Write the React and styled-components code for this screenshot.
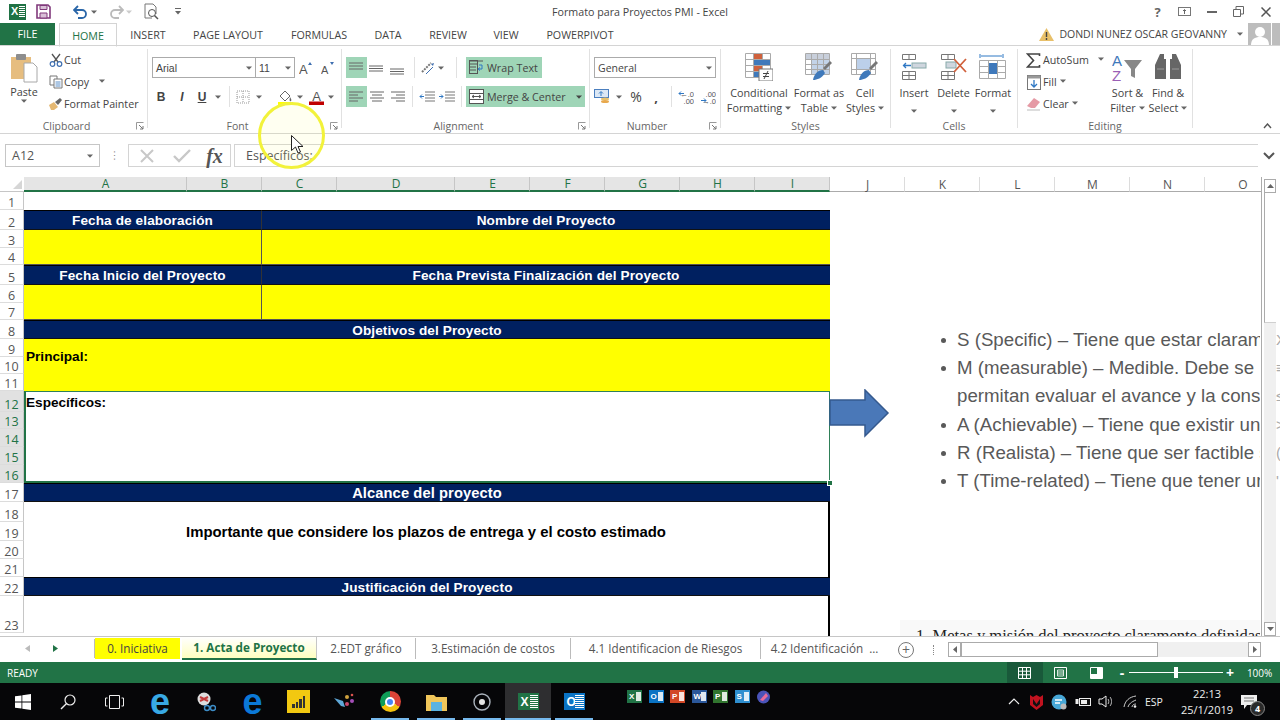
import React from 'react';
import styled, { createGlobalStyle } from 'styled-components';

const UI = `"Open Sans", "Noto Sans", sans-serif`;

const Global = createGlobalStyle`
  html, body { margin: 0; padding: 0; background: #fff; overflow: hidden; }
  * { box-sizing: border-box; }
`;

const Window = styled.div`
  position: relative; width: 1280px; height: 720px; overflow: hidden; display: flex; flex-direction: column;
  font-family: ${UI}; font-size: 11px; color: #444; background: #fff;
`;

/* ---------- title + tabs ---------- */
const TitleBar = styled.div`height: 23px; display: flex; align-items: center; padding-left: 8px; position: relative; flex: none;`;
const Title = styled.div`position: absolute; left: 0; right: 0; top: 5px; text-align: center; font-size: 10.7px; color: #444; pointer-events: none;`;
const QSlot = styled.div`width: ${p => p.$w}px; height: 20px; display: flex; align-items: center; justify-content: center; flex: none;`;
const WinControls = styled.div`margin-left: auto; display: flex; align-items: center; padding-right: 0;`;
const Help = styled.span`font-weight: 700; font-size: 13px; color: #666;`;

const TabRow = styled.div`height: 23px; display: flex; flex: none; align-items: stretch; border-bottom: 1px solid #d4d4d4; position: relative;`;
const FileTab = styled.div`width: 55px; background: #217346; color: #fff; display: flex; align-items: center; justify-content: center; font-size: 10.7px;`;
const RibTab = styled.div`
  width: ${p => p.$w}px; display: flex; align-items: center; justify-content: center; font-size: 10.7px; flex: none; padding-top: 1px;
  color: ${p => (p.$active ? '#217346' : '#444')}; margin-left: ${p => p.$ml || 0}px;
  ${p => p.$active && 'border: 1px solid #d4d4d4; border-bottom: 1px solid #fff; height: 24px;'}
`;
const UserBox = styled.div`margin-left: auto; display: flex; align-items: center; gap: 5px; font-size: 10.5px; color: #444;`;
const UserCaret = styled.span`display: inline-flex; margin-left: 5px;`;
const Avatar = styled.div`width: 23px; height: 22px; background: #bdbdbd; display: flex; align-items: flex-end; justify-content: center; overflow: hidden;`;
const AvatarStub = styled.div`width: 8px; height: 22px; background: #bdbdbd; margin-left: -4px;`;

/* ---------- ribbon ---------- */
const Ribbon = styled.div`height: 87px; flex: none; display: flex; padding: 3px 0 5px; border-bottom: 0; position: relative;`;
const Group = styled.div`
  width: ${p => p.$w}px; flex: none; display: flex; flex-direction: column; position: relative;
  border-right: 1px solid #e1e1e1;
`;
const GroupBody = styled.div`
  flex: 1; min-height: 0; display: flex; flex-direction: ${p => (p.$col ? 'column' : 'row')};
  padding-left: ${p => p.$pl || 0}px; padding-top: ${p => p.$pt || 0}px; gap: ${p => (p.$col ? '8px' : '0')};
`;
const GroupLabel = styled.div`height: 14px; line-height: 14px; margin-bottom: -5px; margin-top: -1px; text-align: center; font-size: 10.5px; color: #666; padding-right: ${p => p.$pr || 0}px;`;
const Launcher = styled.svg`position: absolute; right: 3px; bottom: -2px; width: 8px; height: 8px;`;
const PasteBtn = styled.div`width: 28px; display: flex; flex-direction: column; align-items: center; padding-top: 4px; flex: none; line-height: 15px; font-size: 10.8px;`;
const PasteText = styled.span`margin-top: 1px;`;
const SmallCol = styled.div`display: flex; flex-direction: column; margin-left: ${p => p.$ml || 0}px; width: ${p => p.$w ? p.$w + 'px' : 'auto'}; flex: none;`;
const SmallBtn = styled.div`height: 22px; display: flex; align-items: center; font-size: 10.7px; white-space: nowrap;`;
const SmallIcon = styled.span`width: ${p => p.$w || 17}px; display: flex; justify-content: center; flex: none;`;
const Row = styled.div`display: flex; height: 21px; align-items: center; padding-left: ${p => p.$pl || 0}px;`;
const Slot = styled.div`
  width: ${p => p.$w}px; height: 21px; flex: none; display: flex; align-items: center; justify-content: center;
  background: ${p => (p.$on ? '#9fd5b7' : 'transparent')};
  font-family: ${p => (p.$serif ? '"Liberation Sans", sans-serif' : 'inherit')};
  font-weight: ${p => (p.$b ? 700 : 400)}; font-style: ${p => (p.$i ? 'italic' : 'normal')};
  text-decoration: ${p => (p.$u ? 'underline' : 'none')}; font-size: ${p => p.$fs || 11}px; color: #444;
`;
const Sep = styled.div`
  width: ${p => p.$w}px; height: 21px; flex: none; display: flex; justify-content: center;
  &::before { content: ''; width: 1px; height: 100%; background: #e1e1e1; }
`;
const Combo = styled.div`
  width: ${p => p.$w}px; height: 21px; flex: none; border: 1px solid #ababab; background: #fff; display: flex; align-items: center;
  justify-content: space-between; padding: 0 3px 0 3px; font-size: ${p => p.$fs || 10.5}px; color: #444;
  font-family: ${p => (p.$arial ? '"Liberation Sans", sans-serif' : 'inherit')}; margin-left: ${p => p.$ml || 0}px;
`;
const TextBtn = styled.div`
  width: ${p => p.$w}px; height: 21px; flex: none; background: #9fd5b7; display: flex; align-items: center; padding-left: 3px; gap: 3px;
  font-size: 10.7px; white-space: nowrap; color: #444;
`;
const MergeCaret = styled.span`margin-left: 7px; display: inline-flex;`;
const Big = styled.div`width: ${p => p.$w}px; flex: none; display: flex; flex-direction: column; align-items: center; padding-top: 4px; text-align: center; line-height: 15px; font-size: 10.8px; white-space: nowrap;`;
const BigIcon = styled.div`height: 32px; display: flex; align-items: flex-start; justify-content: center;`;
const BigCaret = styled.span`padding-top: 1px;`;
const Collapse = styled.div`position: absolute; right: 8px; bottom: 1px;`;

const Caret = ({ c = '#666' }) => (<svg width="6" height="4" viewBox="0 0 6 4" style={{ flex: 'none' }}><path d="M0 .5h6L3 3.8z" fill={c} /></svg>);
const CaretText = styled.span`display: inline-flex; vertical-align: middle; margin-left: ${p => p.$ml || 3}px; margin-top: -2px;`;
const LauncherIcon = () => (<Launcher viewBox="0 0 8 8"><path d="M.5 7.5V.5h7" fill="none" stroke="#999" /><path d="M3 3l4 4M7 4v3H4" fill="none" stroke="#777" /></Launcher>);

const Lines = ({ y, w = 16, o = [[0, 14], [0, 14], [0, 14]] }) => (
  <svg width={w} height="14" viewBox="0 0 16 14">{o.map((l, i) => <path key={i} d={`M${l[0]} ${y[i]}h${l[1]}`} stroke="#666" strokeWidth="1" />)}</svg>
);
const Paste = () => (
  <svg width="28" height="30" viewBox="0 0 28 30"><rect x="1" y="4" width="20" height="22" fill="#e6bd7f" /><rect x="6" y="1" width="10" height="6" rx="1" fill="#8d8d8d" /><path d="M14 10h9l4 4v15H14z" fill="#fff" stroke="#a8a8a8" /></svg>
);
const Cut = () => (<svg width="14" height="14" viewBox="0 0 14 14"><path d="M3 1l6 8M11 1L5 9" stroke="#555" strokeWidth="1.3" fill="none" /><circle cx="3.5" cy="11" r="2.3" fill="none" stroke="#3f6fb0" strokeWidth="1.2" /><circle cx="10.5" cy="11" r="2.3" fill="none" stroke="#3f6fb0" strokeWidth="1.2" /></svg>);
const Copy = () => (<svg width="14" height="14" viewBox="0 0 14 14"><path d="M1 1h7v9H1z" fill="#fff" stroke="#777" /><path d="M5 4h8v9H5z" fill="#fff" stroke="#777" /><path d="M6.5 7h5M6.5 9h5M6.5 11h5" stroke="#5a8fc9" /></svg>);
const Painter = () => (<svg width="15" height="14" viewBox="0 0 15 14"><path d="M1 8l5-3 4 5-4 3H3z" fill="#e4b873" /><path d="M7 5l5-4 2 2-4 5z" fill="#666" /></svg>);
const GrowA = ({ up }) => (<svg width="14" height="14" viewBox="0 0 14 14"><text x="0" y="13" fontFamily="Liberation Sans" fontSize={up ? 13 : 11} fill="#555">A</text><path d={up ? 'M9 4l2-3 2 3z' : 'M9 1l2 3 2-3z'} fill="#3f6fb0" /></svg>);
const Borders = () => (<svg width="14" height="14" viewBox="0 0 14 14"><path d="M1 1h12v12H1zM7 1v12M1 7h12" fill="none" stroke="#999" strokeDasharray="1 1" /></svg>);
const Fill = () => (<svg width="15" height="16" viewBox="0 0 15 16"><path d="M2 7l5-5 5 5-5 5z" fill="#fff" stroke="#666" /><path d="M12 8c1 2 2 3 1 4s-2 0-1-4z" fill="#666" /><rect x="0" y="13" width="15" height="3" fill="#ffff00" /></svg>);
const FontColor = () => (<svg width="15" height="16" viewBox="0 0 15 16"><text x="7.5" y="12" textAnchor="middle" fontFamily="Liberation Sans" fontSize="13" fill="#555">A</text><rect x="0" y="12.5" width="15" height="3.5" fill="#c00000" /></svg>);
const Orient = () => (<svg width="16" height="14" viewBox="0 0 16 14"><path d="M2 11L11 2" stroke="#777" strokeWidth="2" strokeDasharray="2 1" /><path d="M6 13l7-7" stroke="#3f6fb0" /><path d="M11 3l3-1-1 3z" fill="#3f6fb0" /></svg>);
const Indent = ({ rev }) => (<svg width="16" height="12" viewBox="0 0 16 12"><path d="M6 1h10M6 4h10M6 7h10M6 10h10" stroke="#777" /><path d={rev ? 'M0 5.5h4M2 3.5l2 2-2 2' : 'M5 5.5H1M3 3.5l-2 2 2 2'} stroke="#2f78c4" fill="none" /></svg>);
const Wrap = () => (<svg width="15" height="15" viewBox="0 0 15 15"><path d="M1 1h13M1 4h8M1 7h6M1 10h6" stroke="#555" /><rect x="0.5" y="0.5" width="8" height="13" fill="none" stroke="#555" /><path d="M10 5h3v4h-3M11 7.5l-2 1.5 2 1.5" stroke="#2f78c4" fill="none" /></svg>);
const Merge = () => (<svg width="15" height="15" viewBox="0 0 15 15"><rect x=".5" y=".5" width="14" height="14" fill="#fff" stroke="#555" /><path d="M.5 4.5h14M.5 10.5h14" stroke="#555" /><path d="M3 7.5h9M3 7.5l2-1.5M3 7.5L5 9M12 7.5L10 6M12 7.5L10 9" stroke="#555" fill="none" /></svg>);
const Account = () => (<svg width="17" height="15" viewBox="0 0 17 15"><rect x=".5" y=".5" width="14" height="8" fill="#dce8f5" stroke="#4b7fbf" /><path d="M7 7V3M5 4.5l2-2 2 2" stroke="#2f78c4" fill="none" /><ellipse cx="11" cy="10" rx="4" ry="1.5" fill="#e8c26e" /><ellipse cx="11" cy="12.5" rx="4" ry="1.5" fill="#e8a94e" /></svg>);
const Dec = ({ t, b, up }) => (<svg width="16" height="14" viewBox="0 0 16 14"><text x="16" y="6.5" textAnchor="end" fontFamily="Liberation Sans" fontSize="7.5" fill="#555">{t}</text><text x="16" y="13.5" textAnchor="end" fontFamily="Liberation Sans" fontSize="7.5" fill="#555">{b}</text><path d={up ? 'M6 3.5H1M3 1.5l-2 2 2 2' : 'M1 10.5h5M4 8.5l2 2-2 2'} stroke="#2f78c4" fill="none" /></svg>);
const CondFmt = () => (<svg width="28" height="28" viewBox="0 0 28 28"><path d="M.5.5h25v24H.5zM.5 6.5h25M.5 12.5h25M.5 18.5h25M8.5.5v24M17.5.5v24" fill="#fff" stroke="#aaa" /><rect x="9" y="1" width="8" height="5" fill="#d0613c" /><rect x="9" y="7" width="16" height="5" fill="#3f79bb" /><rect x="9" y="13" width="8" height="5" fill="#d0613c" /><rect x="9" y="19" width="6" height="5" fill="#3f79bb" /><rect x="14" y="16" width="14" height="12" fill="#fff" stroke="#777" /><path d="M18 20.5h6M18 23.5h6M23 18l-4 8" stroke="#444" /></svg>);
const FmtTable = () => (<svg width="28" height="28" viewBox="0 0 28 28"><path d="M.5.5h24v21H.5z" fill="#fff" stroke="#aaa" /><rect x="1" y="1" width="23" height="5" fill="#c8cfdb" /><rect x="6" y="6" width="18" height="15" fill="#c3d3e8" /><path d="M.5 6.5h24M.5 11.5h24M.5 16.5h24M6.5.5v21M12.5.5v21M18.5.5v21" stroke="#aaa" fill="none" /><path d="M18 15l7-7 2 2-7 7z" fill="#777" /><path d="M8 27c1-6 5-10 10-10l2 3c-3 5-8 7-12 7z" fill="#3f79bb" /></svg>);
const CellStyle = () => (<svg width="28" height="28" viewBox="0 0 28 28"><path d="M.5.5h24v21H.5z" fill="#fff" stroke="#aaa" /><rect x="5" y="6" width="14" height="10" fill="#bcd0ea" /><path d="M.5 5.5h24M.5 16.5h24M5.5.5v21M19.5.5v21" stroke="#aaa" fill="none" /><path d="M18 15l7-7 2 2-7 7z" fill="#777" /><path d="M8 27c1-6 5-10 10-10l2 3c-3 5-8 7-12 7z" fill="#3f79bb" /></svg>);
const Insert = () => (<svg width="26" height="28" viewBox="0 0 26 28"><path d="M1.5 1.5h13v5h-13zM8 1.5v5M1.5 18.5h13v8h-13zM1.5 22.5h13M8 18.5v8" fill="#fff" stroke="#777" /><rect x="11" y="10" width="14" height="5" fill="#cfd6de" stroke="#8aa" /><path d="M10 12.5H3M5 10l-2.5 2.5L5 15" stroke="#2f78c4" strokeWidth="1.3" fill="none" /></svg>);
const Delete = () => (<svg width="28" height="28" viewBox="0 0 28 28"><path d="M1.5 1.5h13v5h-13zM8 1.5v5M1.5 18.5h13v8h-13zM1.5 22.5h13M8 18.5v8" fill="#fff" stroke="#777" /><rect x="6" y="9" width="10" height="6" fill="#cfd6de" stroke="#8aa" /><path d="M14 6l12 13M26 6L14 19" stroke="#d0613c" strokeWidth="1.8" /></svg>);
const Format = () => (<svg width="28" height="30" viewBox="0 0 28 30"><path d="M1 1v4M24 1v4M2 3h21" stroke="#2f78c4" /><path d="M.5 7.5h26v18H.5zM9.5 7.5v18M18.5 7.5v18M.5 13.5h26M.5 19.5h26" fill="#fff" stroke="#aaa" /><rect x="10" y="10" width="8" height="11" fill="#3f79bb" /></svg>);
const Sigma = () => (<svg width="15" height="15" viewBox="0 0 15 15"><path d="M13.5 3V1H1.5l6 6.5-6 6.5h12v-2" fill="none" stroke="#444" strokeWidth="1.6" /></svg>);
const FillD = () => (<svg width="14" height="15" viewBox="0 0 14 15"><rect x=".5" y=".5" width="13" height="14" fill="#fff" stroke="#777" /><rect x=".5" y=".5" width="13" height="3" fill="#999" /><path d="M7 5v7M4 9l3 3 3-3" stroke="#2f78c4" strokeWidth="1.3" fill="none" /></svg>);
const Eraser = () => (<svg width="15" height="14" viewBox="0 0 15 14"><path d="M8 1l6 4-5 6H5L1 9z" fill="#e59aa5" /><path d="M1 13h13" stroke="#bbb" /></svg>);
const SortF = () => (<svg width="32" height="30" viewBox="0 0 32 30"><text x="0" y="13" fontFamily="Liberation Sans" fontSize="15" fill="#3f79bb">A</text><text x="0" y="28" fontFamily="Liberation Sans" fontSize="15" fill="#9a5fb5">Z</text><path d="M12 7h18l-7 9v9l-4-2v-7z" fill="#888" /></svg>);
const Binoc = () => (<svg width="26" height="28" viewBox="0 0 26 28"><path d="M5 1h4v5h2v20H0V12zM21 1h-4v5h-2v20h11V12z" fill="#666" /><path d="M2 16h7M17 16h7" stroke="#999" /></svg>);
const Up = () => (<svg width="9" height="6" viewBox="0 0 9 6"><path d="M1 5l3.5-4L8 5" fill="none" stroke="#555" strokeWidth="1.4" /></svg>);

/* ---------- formula bar ---------- */
const FormulaArea = styled.div`height: 44px; flex: none; border-top: 1px solid #d4d4d4; padding: 10px 0 10px 5px; display: flex; align-items: stretch;`;
const NameBox = styled.div`width: 95px; border: 1px solid #c6c6c6; display: flex; align-items: center; justify-content: space-between; padding: 0 6px; font-size: 12.5px; color: #555;`;
const Dots = styled.div`width: 28px; display: flex; align-items: center; justify-content: center; color: #888; font-size: 11px; letter-spacing: 0; writing-mode: vertical-rl;`;
const FxBox = styled.div`width: 103px; border: 1px solid #d4d4d4; display: flex; align-items: center; font-size: 11px;`;
const FxSlot = styled.div`width: ${p => p.$w}px; display: flex; justify-content: center; align-items: center; flex: none;`;
const Fx = styled.span`font-family: "Liberation Serif", serif; font-style: italic; font-weight: 700; font-size: 20px; color: #555; line-height: 20px;`;
const FormulaInput = styled.div`width: 1024px; margin-left: 3px; border: 1px solid #d4d4d4; border-right: 0; display: flex; align-items: center; padding-left: 11px; font-size: 12.5px; color: #555;`;
const FormulaEnd = styled.div`flex: 1; display: flex; align-items: center; justify-content: center; padding-right: 0;`;

/* ---------- sheet ---------- */
const SheetRow = styled.div`flex: 1; min-height: 0; display: flex;`;
const Main = styled.div`width: 1262px; flex: none; display: flex; flex-direction: column; border-right: 1px solid #ababab;`;
const ColBar = styled.div`height: 15px; flex: none; display: flex; overflow: visible;`;
const Corner = styled.div`width: 24px; flex: none; display: flex; align-items: flex-end; justify-content: flex-end; padding: 0 2px 2px 0; border-bottom: 1px solid #c6c6c6;`;
const ColHead = styled.div`
  width: ${p => p.$w}px; flex: none; display: flex; align-items: center; justify-content: center; font-size: 12px; line-height: 13px; padding-left: 1px;
  background: ${p => (p.$sel ? '#e5e5e5' : 'transparent')}; color: ${p => (p.$sel ? '#217346' : '#555')};
  border-right: 1px solid ${p => (p.$sel ? '#c6c6c6' : '#dcdcdc')};
  border-bottom: ${p => (p.$sel ? '2px solid #217346' : '1px solid #ababab')};
`;
const ColEnd = styled.div`width: 57px; height: 15px; flex: none; border-bottom: 1px solid #ababab;`;
const ColEndLabel = styled.div`width: 75px; display: flex; justify-content: center; line-height: 13px; font-size: 12px; color: #555; padding-left: 1px; height: 14px; align-items: center;`;
const Grid = styled.div`
  flex: 1; min-height: 0; position: relative; overflow: hidden; display: grid;
  grid-template-columns: 24px 163px 75px 75px 118px 75px 75px 75px 75px 75px 431px;
  grid-template-rows: ${p => p.$rows};
`;
const RowHead = styled.div`
  grid-column: 1; grid-row: ${p => p.$r}; display: flex; align-items: flex-end; justify-content: center; padding-bottom: 0;
  font-size: 12.5px; line-height: 13px; border-right: 1px solid #c6c6c6; border-bottom: 1px solid #dcdcdc;
  background: ${p => (p.$sel ? '#e1e1e1' : '#fff')}; color: ${p => (p.$sel ? '#217346' : '#555')};
`;
const Band = styled.div`
  grid-column: ${p => p.$c}; grid-row: ${p => p.$r}; background: #002060; color: #fff; display: flex; align-items: center; justify-content: center;
  font: 700 ${p => p.$fs || 13.6}px/15px "Liberation Sans", Arial, sans-serif; letter-spacing: .1px; white-space: nowrap; padding-top: 1px;
  border-top: 1px solid #000; border-bottom: 1px solid #111;
  border-right: ${p => (p.$div ? '1px solid #333' : '0')};
`;
const Yellow = styled.div`
  grid-column: ${p => p.$c}; grid-row: ${p => p.$r}; background: #ffff00; color: #000; padding: ${p => p.$pt || 0}px 2px 0;
  font: 700 13.6px/15px "Liberation Sans", Arial, sans-serif;
  border-bottom: ${p => (p.$nb ? '0' : '1px solid #555')}; border-right: ${p => (p.$div ? '1px solid #555' : '0')};
`;
const Selected = styled.div`
  grid-column: 2 / 11; grid-row: 12 / 17; border: 1px solid #2f8058; border-bottom: 2px solid #217346; border-left: 2px solid #217346; padding: 3px 0 0;
  font: 700 13.6px/15px "Liberation Sans", Arial, sans-serif; color: #000;
`;
const Blank = styled.div`
  grid-column: 2 / 11; grid-row: ${p => p.$r}; border-right: 2px solid #000; color: #000; text-align: center; padding-top: ${p => p.$pt || 0}px;
  font: 700 14.9px/17px "Liberation Sans", Arial, sans-serif; white-space: nowrap;
`;
const Handle = styled.div`position: absolute; left: 827px; top: 288px; width: 6px; height: 6px; background: #217346; border: 1px solid #fff;`;
const Arrow = styled.svg`position: absolute; left: 829px; top: 197px; width: 61px; height: 49px;`;
const Picture = styled.ul`
  position: absolute; left: 905px; top: 134px; width: 355px; margin: 0; padding: 0; list-style: none; overflow: hidden; background: #fff;
  font: 18.7px/28.2px "Liberation Sans", Arial, sans-serif; color: #595959; white-space: nowrap;
`;
const Bullet = styled.li`
  padding-left: 52px; position: relative; word-spacing: ${p => p.$ws || 0}px;
  ${p => !p.$cont && `&::before { content: ''; position: absolute; left: 36px; top: 12px; width: 5px; height: 5px; border-radius: 50%; background: #595959; }`}
`;
const Picture2 = styled.div`
  position: absolute; left: 900px; top: 428px; width: 360px; height: 16px; background: #f9f9f9; overflow: hidden; padding: 8px 0 0 16px;
  font: 16.5px/16px "Liberation Serif", serif; color: #222; white-space: nowrap;
`;
const VScroll = styled.div`flex: 1; position: relative; overflow: hidden;`;
const ScrollBtn = styled.div`
  position: absolute; left: 2px; width: 12px; height: 14px; ${p => (p.$top ? 'top: 2px;' : 'bottom: 0;')} display: flex; align-items: center; justify-content: center;
  background: #fff; border: 1px solid #ababab;
`;
const ScrollThumb = styled.div`position: absolute; left: 2px; top: 16px; width: 12px; height: 130px; background: #fff; border-left: 1px solid #ababab; border-bottom: 1px solid #d0d0d0;`;
const ScrollTrack = styled.div`position: absolute; left: 2px; top: 146px; bottom: 14px; width: 12px; background: #f0f0f0;`;
const Fragments = styled.div`position: absolute; left: 14px; top: 149px; font: 15px/28.2px "Liberation Sans", sans-serif; color: #aaa; width: 6px; overflow: hidden; white-space: pre;`;

/* ---------- sheet tabs ---------- */
const TabsBar = styled.div`height: 26px; flex: none; border-top: 1px solid #c6c6c6; display: flex; align-items: stretch; background: #fff;`;
const TabNav = styled.div`width: 95px; flex: none; display: flex; align-items: center; padding-left: 25px; gap: 23px; border-right: 1px solid #bbb; margin: 2px 0 4px;`;
const Sheet = styled.div`
  width: ${p => p.$w}px; flex: none; display: flex; align-items: center; justify-content: center; font-size: 11.7px; white-space: nowrap; color: #555;
  margin: 1px 0 3px; border-right: 1px solid ${p => (p.$plain ? '#bbb' : 'transparent')}; height: 21px; padding-bottom: 1px;
  ${p => p.$yellow && 'background: #ffff00; color: #444; border-right: 2px solid #fff; height: 21px;'}
  ${p => p.$active && 'background: linear-gradient(#ffffff, #ffffc0); color: #217346; font-weight: 700; border-bottom: 2px solid #217346; margin-top: 0; height: 23px; margin-bottom: 2px; border-right: 1px solid #c6c6c6;'}
`;
const TabsEnd = styled.div`flex: 1; display: flex; align-items: center; min-width: 0;`;
const Plus = styled.div`width: 16px; height: 16px; border: 1px solid #777; border-radius: 50%; display: flex; align-items: center; justify-content: center; color: #666; font-size: 14px; line-height: 12px; margin-left: 9px; flex: none;`;
const VDots = styled.div`width: 1px; height: 10px; margin: 0 14px 0 19px; border-left: 1px dotted #888; flex: none;`;
const HScroll = styled.div`width: 313px; height: 15px; flex: none; display: flex; background: #f0f0f0;`;
const HBtn = styled.div`width: 13px; flex: none; border: 1px solid #ababab; background: #fff; display: flex; align-items: center; justify-content: center;`;
const HThumb = styled.div`width: ${p => p.$w}px; flex: none; background: #fff; border: 1px solid #ababab;`;
const HGap = styled.div`flex: 1;`;

/* ---------- status ---------- */
const Status = styled.div`height: 21px; flex: none; background: #217346; color: #fff; display: flex; align-items: center; font-size: 10px; padding-left: 7px;`;
const ViewBox = styled.div`width: 36px; height: 21px; flex: none; display: flex; align-items: center; justify-content: center; background: ${p => (p.$on ? '#19593a' : 'transparent')}; margin-left: ${p => p.$ml || 0}px;`;
const ZoomSign = styled.span`font-size: 14px; font-weight: 700; width: 14px; text-align: center; flex: none; line-height: 14px;`;
const ZoomSlider = styled.div`width: 94px; height: 1px; background: #fff; position: relative; flex: none; margin: 0 0;`;
const ZoomThumb = styled.div`position: absolute; left: 45px; top: -5px; width: 4px; height: 11px; background: #fff;`;
const Pct = styled.span`margin-left: 10px; font-size: 10px;`;

/* ---------- taskbar ---------- */
const Task = styled.div`height: 37px; flex: none; background: #060608; display: flex; align-items: center; position: relative; color: #eee;`;
const TaskBtn = styled.div`
  width: ${p => p.$w}px; height: 37px; flex: none; display: flex; align-items: center; justify-content: center; position: relative; margin-left: ${p => p.$ml || 0}px;
  background: ${p => (p.$on ? '#2e2e30' : 'transparent')};
  ${p => p.$run && `&::after { content: ''; position: absolute; left: 0; right: 0; bottom: 0; height: 2px; background: #76b9ed; }`}
`;
const E = styled.span`font: 700 ${p => p.$s || 28}px/30px "Liberation Sans", sans-serif; color: ${p => p.$c};`;
const PowerBi = styled.div`width: 23px; height: 23px; background: #f2c811; display: flex; align-items: flex-end; justify-content: center; gap: 1px; padding-bottom: 5px;`;
const PBar = styled.div`width: 2.5px; background: #333; height: ${p => p.$h}px;`;
const Chrome = styled.div`width: 21px; height: 21px; border-radius: 50%; background: conic-gradient(#db4437 0 120deg, #f4c20d 120deg 240deg, #0f9d58 240deg 360deg); display: flex; align-items: center; justify-content: center;`;
const ChromeCore = styled.div`width: 10px; height: 10px; border-radius: 50%; background: #4285f4; border: 2px solid #fff;`;
const AppTile = styled.div`
  width: ${p => p.$w}px; height: ${p => p.$h}px; background: ${p => p.$bg}; color: #fff; display: flex; align-items: center; justify-content: flex-start; padding-left: ${p => p.$pad || 2}px;
  font: 700 ${p => p.$fs || 11}px/1 "Liberation Sans", sans-serif; position: relative; flex: none;
  &::after { content: ''; position: absolute; right: 1px; top: 2px; bottom: 2px; width: ${p => p.$pw || 7}px; background: repeating-linear-gradient(#fff 0 1px, ${p => p.$bg} 1px 2px); }
`;
const SmallTray = styled.div`display: flex; align-items: center; gap: 6.5px; margin-left: 34px; height: 37px; padding-bottom: 10px;`;
const SmallTile = styled.div`
  width: 15px; height: 13px; background: ${p => p.$bg}; color: #fff; font: 700 8px/13px "Liberation Sans", sans-serif; padding-left: 2px; flex: none; position: relative;
  &::after { content: ''; position: absolute; right: 1px; top: 2px; bottom: 2px; width: 5px; background: #fff; opacity: .85; }
`;
const TrayArea = styled.div`margin-left: auto; display: flex; align-items: center; height: 37px; padding-right: 12px;`;
const TrayIcon = styled.div`width: ${p => p.$w}px; flex: none; display: flex; align-items: center; justify-content: center;`;
const Lang = styled.span`font-size: 10.5px; width: 24px; text-align: center; color: #eee; flex: none;`;
const Clock = styled.div`width: 70px; text-align: center; font-size: 11px; line-height: 16px; margin-left: 6px; color: #eee; flex: none;`;
const Notif = styled.div`width: 38px; position: relative; display: flex; justify-content: center; flex: none; margin-left: -12px;`;
const NotifBadge = styled.span`position: absolute; left: 20px; top: 6px; width: 15px; height: 15px; border-radius: 50%; background: #2a2a2a; border: 1px solid #888; color: #fff; font-size: 9px; font-weight: 700; line-height: 13px; text-align: center;`;

/* ---------- overlay ---------- */
const Halo = styled.div`position: absolute; left: 258px; top: 102px; width: 67px; height: 67px; border-radius: 50%; border: 3px solid #f2f23a; background: rgba(255,255,120,.10); pointer-events: none;`;
const Pointer = styled.svg`position: absolute; left: 291px; top: 135px; width: 12px; height: 19px;`;

/* ---------- data ---------- */
const heights = [18, 20, 18, 17, 20, 18, 17, 19, 18, 17, 17, 21, 17, 18, 18, 18, 19, 20, 19, 18, 18, 19, 37, 3];
const cols = [['A', 163], ['B', 75], ['C', 75], ['D', 118], ['E', 75], ['F', 75], ['G', 75], ['H', 75], ['I', 75]];
const restCols = [['J', 75], ['K', 75], ['L', 75], ['M', 75], ['N', 75]];

export default function App() {
  return (
    <Window>
      <Global />
      <TitleBar>
        <QSlot $w={19}><AppTile $w={17} $h={16} $bg="#1f7244" $pad={2} $fs={11} $pw={6}>X</AppTile></QSlot>
        <QSlot $w={9} />
        <QSlot $w={15}><svg width="15" height="15" viewBox="0 0 15 15"><path d="M1 1h11l2 2v11H1z" fill="#fff" stroke="#80397b" strokeWidth="1.6" /><path d="M4 1.5h7v4H4zM4 9h7v5H4z" fill="#d9c0d7" stroke="#80397b" /></svg></QSlot>
        <QSlot $w={21} />
        <QSlot $w={16}><svg width="15" height="14" viewBox="0 0 15 14"><path d="M2 5h7a4 4 0 0 1 0 8H5" fill="none" stroke="#2a66a8" strokeWidth="1.8" /><path d="M5 1L1 5l4 4" fill="none" stroke="#2a66a8" strokeWidth="1.8" /></svg></QSlot>
        <QSlot $w={12}><Caret /></QSlot>
        <QSlot $w={8} />
        <QSlot $w={16}><svg width="15" height="14" viewBox="0 0 15 14"><path d="M13 5H6a4 4 0 0 0 0 8h4" fill="none" stroke="#bbb" strokeWidth="1.8" /><path d="M10 1l4 4-4 4" fill="none" stroke="#bbb" strokeWidth="1.8" /></svg></QSlot>
        <QSlot $w={10}><Caret c="#ccc" /></QSlot>
        <QSlot $w={8} />
        <QSlot $w={18}><svg width="15" height="17" viewBox="0 0 15 17"><path d="M1 1h8l3 3v7M1 1v14h7" fill="#fff" stroke="#777" /><circle cx="8" cy="10" r="3.5" fill="#fff" stroke="#555" /><path d="M10.5 12.5l3.5 3.5" stroke="#555" strokeWidth="1.5" /></svg></QSlot>
        <QSlot $w={14} />
        <QSlot $w={8}><svg width="6" height="7" viewBox="0 0 6 7"><path d="M0 .5h6" stroke="#666" /><path d="M0 3h6L3 6.5z" fill="#666" /></svg></QSlot>
        <Title>Formato para Proyectos PMI - Excel</Title>
        <WinControls>
          <QSlot $w={27}><Help>?</Help></QSlot>
          <QSlot $w={27}><svg width="13" height="9" viewBox="0 0 13 9"><rect x=".5" y=".5" width="12" height="8" fill="none" stroke="#777" /><path d="M6.5 7V3M5 4l1.5-1.5L8 4" stroke="#666" fill="none" /></svg></QSlot>
          <QSlot $w={27}><svg width="10" height="2" viewBox="0 0 10 2"><rect width="10" height="2" fill="#666" /></svg></QSlot>
          <QSlot $w={27}><svg width="11" height="11" viewBox="0 0 11 11"><path d="M.5 3.5h7v7h-7zM3 3V.5h7.5V8H8" fill="none" stroke="#666" /></svg></QSlot>
          <QSlot $w={27}><svg width="10" height="10" viewBox="0 0 10 10"><path d="M.5.5l9 9M9.5.5l-9 9" stroke="#555" strokeWidth="1.5" /></svg></QSlot>
          <QSlot $w={1} />
        </WinControls>
      </TitleBar>

      <TabRow>
        <FileTab>FILE</FileTab>
        <RibTab $w={58} $ml={4} $active>HOME</RibTab>
        <RibTab $w={62}>INSERT</RibTab>
        <RibTab $w={98}>PAGE LAYOUT</RibTab>
        <RibTab $w={84}>FORMULAS</RibTab>
        <RibTab $w={54}>DATA</RibTab>
        <RibTab $w={66}>REVIEW</RibTab>
        <RibTab $w={50}>VIEW</RibTab>
        <RibTab $w={98}>POWERPIVOT</RibTab>
        <UserBox>
          <svg width="15" height="13" viewBox="0 0 15 13"><path d="M7.5 0L15 13H0z" fill="#e8c06a" /><path d="M7.5 4v5M7.5 10v2" stroke="#444" strokeWidth="1.4" /></svg>
          <span>DONDI NUNEZ OSCAR GEOVANNY</span>
          <UserCaret><Caret /></UserCaret>
          <Avatar><svg width="20" height="20" viewBox="0 0 20 20"><circle cx="10" cy="7" r="5" fill="#fff" /><path d="M1 20c0-6 4-8 9-8s9 2 9 8z" fill="#fff" /></svg></Avatar>
          <AvatarStub />
        </UserBox>
      </TabRow>

      <Ribbon>
        <Group $w={148}>
          <GroupBody $pl={10}>
            <PasteBtn><Paste /><PasteText>Paste</PasteText><Caret /></PasteBtn>
            <SmallCol $ml={9}>
              <SmallBtn><SmallIcon><Cut /></SmallIcon>Cut</SmallBtn>
              <SmallBtn><SmallIcon><Copy /></SmallIcon>Copy<CaretText $ml={10}><Caret /></CaretText></SmallBtn>
              <SmallBtn><SmallIcon><Painter /></SmallIcon>Format Painter</SmallBtn>
            </SmallCol>
          </GroupBody>
          <GroupLabel $pr={14}>Clipboard</GroupLabel>
          <LauncherIcon />
        </Group>

        <Group $w={194}>
          <GroupBody $col $pt={8}>
            <Row $pl={4}>
              <Combo $w={104} $arial>Arial<Caret /></Combo>
              <Combo $w={40} $ml={-1} $arial>11<Caret /></Combo>
              <Slot $w={22}><GrowA up /></Slot>
              <Slot $w={21}><GrowA /></Slot>
            </Row>
            <Row $pl={3}>
              <Slot $w={20} $serif $b $fs={12}>B</Slot>
              <Slot $w={22} $serif $b $i $fs={12}>I</Slot>
              <Slot $w={18} $serif $b $u $fs={12}>U</Slot>
              <Slot $w={14}><Caret /></Slot>
              <Sep $w={8} />
              <Slot $w={20}><Borders /></Slot>
              <Slot $w={12}><Caret /></Slot>
              <Slot $w={10} />
              <Slot $w={20}><Fill /></Slot>
              <Slot $w={10}><Caret /></Slot>
              <Slot $w={22}><FontColor /></Slot>
              <Slot $w={8}><Caret /></Slot>
            </Row>
          </GroupBody>
          <GroupLabel $pr={14}>Font</GroupLabel>
          <LauncherIcon />
        </Group>

        <Group $w={248}>
          <GroupBody $col $pt={8}>
            <Row $pl={4}>
              <Slot $w={21} $on><Lines y={[2, 5, 8]} /></Slot>
              <Slot $w={20}><Lines y={[5, 7.5, 10]} /></Slot>
              <Slot $w={21}><Lines y={[8, 10.5, 13]} /></Slot>
              <Sep $w={12} />
              <Slot $w={16}><Orient /></Slot>
              <Slot $w={10}><Caret /></Slot>
              <Sep $w={20} />
              <TextBtn $w={76}><Wrap />Wrap Text</TextBtn>
            </Row>
            <Row $pl={4}>
              <Slot $w={21} $on><Lines y={[2, 5, 8, 11]} o={[[0, 14], [0, 9], [0, 14], [0, 9]]} /></Slot>
              <Slot $w={20}><Lines y={[2, 5, 8, 11]} o={[[1, 14], [3, 10], [1, 14], [3, 10]]} /></Slot>
              <Slot $w={21}><Lines y={[2, 5, 8, 11]} o={[[1, 14], [6, 9], [1, 14], [6, 9]]} /></Slot>
              <Sep $w={9} />
              <Slot $w={20}><Indent /></Slot>
              <Slot $w={20}><Indent rev /></Slot>
              <Sep $w={9} />
              <TextBtn $w={119}><Merge />Merge &amp; Center<MergeCaret><Caret c="#444" /></MergeCaret></TextBtn>
            </Row>
          </GroupBody>
          <GroupLabel $pr={14}>Alignment</GroupLabel>
          <LauncherIcon />
        </Group>

        <Group $w={131}>
          <GroupBody $col $pt={8}>
            <Row $pl={4}><Combo $w={122}>General<Caret /></Combo></Row>
            <Row $pl={2}>
              <Slot $w={20}><Account /></Slot>
              <Slot $w={14}><Caret /></Slot>
              <Slot $w={20} $fs={14}>%</Slot>
              <Slot $w={20} $b $fs={13}>,</Slot>
              <Sep $w={10} />
              <Slot $w={19}><Dec t="←.0" b=".00" up /></Slot>
              <Slot $w={3} />
              <Slot $w={20}><Dec t=".00" b="→.0" /></Slot>
            </Row>
          </GroupBody>
          <GroupLabel $pr={16}>Number</GroupLabel>
          <LauncherIcon />
        </Group>

        <Group $w={170}>
          <GroupBody $pl={8}>
            <Big $w={60}><BigIcon><CondFmt /></BigIcon>Conditional<span>Formatting<CaretText><Caret /></CaretText></span></Big>
            <Big $w={60}><BigIcon><FmtTable /></BigIcon>Format as<span>Table<CaretText><Caret /></CaretText></span></Big>
            <Big $w={32}><BigIcon><CellStyle /></BigIcon>Cell<span>Styles<CaretText><Caret /></CaretText></span></Big>
          </GroupBody>
          <GroupLabel>Styles</GroupLabel>
        </Group>

        <Group $w={127}>
          <GroupBody $pl={3}>
            <Big $w={40}><BigIcon><Insert /></BigIcon>Insert<BigCaret><Caret /></BigCaret></Big>
            <Big $w={39}><BigIcon><Delete /></BigIcon>Delete<BigCaret><Caret /></BigCaret></Big>
            <Big $w={40}><BigIcon><Format /></BigIcon>Format<BigCaret><Caret /></BigCaret></Big>
          </GroupBody>
          <GroupLabel>Cells</GroupLabel>
        </Group>

        <Group $w={175}>
          <GroupBody $pl={6}>
            <SmallCol $w={84}>
              <SmallBtn><SmallIcon $w={19}><Sigma /></SmallIcon>AutoSum<CaretText $ml={9}><Caret /></CaretText></SmallBtn>
              <SmallBtn><SmallIcon $w={19}><FillD /></SmallIcon>Fill<CaretText><Caret /></CaretText></SmallBtn>
              <SmallBtn><SmallIcon $w={19}><Eraser /></SmallIcon>Clear<CaretText><Caret /></CaretText></SmallBtn>
            </SmallCol>
            <Big $w={39}><BigIcon><SortF /></BigIcon>Sort &amp;<span>Filter<CaretText><Caret /></CaretText></span></Big>
            <Big $w={42}><BigIcon><Binoc /></BigIcon>Find &amp;<span>Select<CaretText><Caret /></CaretText></span></Big>
          </GroupBody>
          <GroupLabel>Editing</GroupLabel>
        </Group>
        <Collapse><Up /></Collapse>
      </Ribbon>

      <FormulaArea>
        <NameBox>A12<Caret /></NameBox>
        <Dots>⋯</Dots>
        <FxBox>
          <FxSlot $w={35}><svg width="16" height="16" viewBox="0 0 16 16"><path d="M2 2l12 12M14 2L2 14" stroke="#c8c8c8" strokeWidth="2" /></svg></FxSlot>
          <FxSlot $w={35}><svg width="18" height="15" viewBox="0 0 18 15"><path d="M1 8l5 5L17 2" fill="none" stroke="#c8c8c8" strokeWidth="2.4" /></svg></FxSlot>
          <FxSlot $w={31}><Fx>fx</Fx></FxSlot>
        </FxBox>
        <FormulaInput>Específicos:</FormulaInput>
        <FormulaEnd><svg width="12" height="8" viewBox="0 0 12 8"><path d="M1 1l5 5 5-5" fill="none" stroke="#555" strokeWidth="2" /></svg></FormulaEnd>
      </FormulaArea>

      <SheetRow>
        <Main>
          <ColBar>
            <Corner><svg width="9" height="9" viewBox="0 0 9 9"><path d="M9 0v9H0z" fill="#d6d6d6" /></svg></Corner>
            {cols.map(([n, w]) => <ColHead key={n} $w={w} $sel>{n}</ColHead>)}
            {restCols.map(([n, w]) => <ColHead key={n} $w={w}>{n}</ColHead>)}
            <ColEnd><ColEndLabel>O</ColEndLabel></ColEnd>
          </ColBar>
          <Grid $rows={heights.map(h => h + 'px').join(' ')}>
            {heights.map((_, i) => i < 23 && <RowHead key={i} $r={i + 1} $sel={i >= 11 && i <= 15}>{i + 1}</RowHead>)}
            <Band $c="2 / 4" $r="2" $div>Fecha de elaboración</Band>
            <Band $c="4 / 11" $r="2">Nombre del Proyecto</Band>
            <Yellow $c="2 / 4" $r="3 / 5" $div />
            <Yellow $c="4 / 11" $r="3 / 5" />
            <Band $c="2 / 4" $r="5" $div>Fecha Inicio del Proyecto</Band>
            <Band $c="4 / 11" $r="5">Fecha Prevista Finalización del Proyecto</Band>
            <Yellow $c="2 / 4" $r="6 / 8" $div />
            <Yellow $c="4 / 11" $r="6 / 8" />
            <Band $c="2 / 11" $r="8">Objetivos del Proyecto</Band>
            <Yellow $c="2 / 11" $r="9 / 12" $pt={10} $nb>Principal:</Yellow>
            <Selected>Específicos:</Selected>
            <Band $c="2 / 11" $r="17" $fs={14.7}>Alcance del proyecto</Band>
            <Blank $r="18 / 22" $pt={22}>Importante que considere los plazos de entrega y el costo estimado</Blank>
            <Band $c="2 / 11" $r="22">Justificación del Proyecto</Band>
            <Blank $r="23 / 25" />
            <Handle />
            <Arrow viewBox="0 0 61 49"><path d="M1 11h35V1l23 23-23 23V36H1z" fill="#4a78b8" stroke="#35598e" strokeWidth="1.5" /></Arrow>
            <Picture>
              <Bullet>S (Specific) – Tiene que estar claram</Bullet>
              <Bullet>M (measurable) – Medible. Debe se</Bullet>
              <Bullet $cont>permitan evaluar el avance y la cons</Bullet>
              <Bullet>A (Achievable) – Tiene que existir un</Bullet>
              <Bullet>R (Realista) – Tiene que ser factible s</Bullet>
              <Bullet>T (Time-related) – Tiene que tener un</Bullet>
            </Picture>
            <Picture2>1. Metas y misión del proyecto claramente definidas</Picture2>
          </Grid>
        </Main>
        <VScroll>
          <ScrollBtn $top><svg width="7" height="4" viewBox="0 0 7 4"><path d="M0 4l3.5-4L7 4z" fill="#666" /></svg></ScrollBtn>
          <ScrollThumb />
          <ScrollTrack />
          <ScrollBtn><svg width="7" height="4" viewBox="0 0 7 4"><path d="M0 0l3.5 4L7 0z" fill="#666" /></svg></ScrollBtn>
          <Fragments>{'X\n≡\n≤\n>\n(\n\''}</Fragments>
        </VScroll>
      </SheetRow>

      <TabsBar>
        <TabNav>
          <svg width="5" height="7" viewBox="0 0 5 7"><path d="M5 0v7L0 3.5z" fill="#bbb" /></svg>
          <svg width="5" height="7" viewBox="0 0 5 7"><path d="M0 0v7l5-3.5z" fill="#217346" /></svg>
        </TabNav>
        <Sheet $w={87} $yellow>0. Iniciativa</Sheet>
        <Sheet $w={135} $active>1. Acta de Proyecto</Sheet>
        <Sheet $w={99} $plain>2.EDT gráfico</Sheet>
        <Sheet $w={155} $plain>3.Estimación de costos</Sheet>
        <Sheet $w={190} $plain>4.1 Identificacion de Riesgos</Sheet>
        <Sheet $w={128}>4.2 Identificación&nbsp;&nbsp;...</Sheet>
        <TabsEnd>
          <Plus>+</Plus>
          <VDots />
          <HScroll>
            <HBtn><svg width="4" height="7" viewBox="0 0 4 7"><path d="M4 0v7L0 3.5z" fill="#666" /></svg></HBtn>
            <HThumb $w={197} />
            <HGap />
            <HBtn><svg width="4" height="7" viewBox="0 0 4 7"><path d="M0 0v7l4-3.5z" fill="#666" /></svg></HBtn>
          </HScroll>
        </TabsEnd>
      </TabsBar>

      <Status>
        READY
        <ViewBox $ml={969} $on><svg width="13" height="12" viewBox="0 0 13 12"><path d="M.5.5h12v11H.5zM.5 4.2h12M.5 7.8h12M4.5.5v11M8.5.5v11" fill="none" stroke="#fff" /></svg></ViewBox>
        <ViewBox><svg width="13" height="12" viewBox="0 0 13 12"><path d="M.5.5h12v11H.5z" fill="none" stroke="#fff" /><path d="M3.5 3h6v6h-6zM3.5 5h6M3.5 7h6" fill="none" stroke="#fff" strokeWidth=".8" /></svg></ViewBox>
        <ViewBox><svg width="13" height="12" viewBox="0 0 13 12"><path d="M.5.5h12v11H.5z" fill="none" stroke="#fff" /><path d="M1 7h11v4H1zM7 1h5v6H7z" fill="#fff" /></svg></ViewBox>
        <ZoomSign>-</ZoomSign>
        <ZoomSlider><ZoomThumb /></ZoomSlider>
        <ZoomSign>+</ZoomSign>
        <Pct>100%</Pct>
      </Status>

      <Task>
        <TaskBtn $w={45}><svg width="16" height="16" viewBox="0 0 16 16"><path d="M0 2.3l6.5-.9v6.2H0zM7.3 1.3L16 0v7.6H7.3zM0 8.4h6.5v6.2L0 13.7zM7.3 8.4H16V16l-8.7-1.3z" fill="#fff" /></svg></TaskBtn>
        <TaskBtn $w={46}><svg width="16" height="16" viewBox="0 0 16 16"><circle cx="10" cy="6" r="5" fill="none" stroke="#eee" strokeWidth="1.2" /><path d="M6.3 9.7L1 15" stroke="#eee" strokeWidth="1.4" /></svg></TaskBtn>
        <TaskBtn $w={46}><svg width="19" height="14" viewBox="0 0 19 14"><path d="M4.5.5h10v13h-10z" fill="none" stroke="#eee" /><path d="M2.5 3H.5v8h2M16.5 3h2v8h-2" fill="none" stroke="#eee" /></svg></TaskBtn>
        <TaskBtn $w={46}><E $c="#38a9e4" $s={36}>e</E></TaskBtn>
        <TaskBtn $w={46}><svg width="20" height="20" viewBox="0 0 20 20"><circle cx="8" cy="7" r="6.5" fill="#ddd" /><path d="M4 5l8 4M4 9l8-4" stroke="#c23b3b" strokeWidth="2" /><circle cx="11" cy="16" r="2.5" fill="none" stroke="#3d8dc7" strokeWidth="1.4" /><circle cx="17" cy="16" r="2.5" fill="none" stroke="#3d8dc7" strokeWidth="1.4" /></svg></TaskBtn>
        <TaskBtn $w={47}><E $c="#0b78d7" $s={36}>e</E></TaskBtn>
        <TaskBtn $w={45}><PowerBi><PBar $h={4} /><PBar $h={6} /><PBar $h={9} /><PBar $h={12} /></PowerBi></TaskBtn>
        <TaskBtn $w={46}><svg width="22" height="18" viewBox="0 0 22 18"><path d="M1 5l9 3 2 6-4-1z" fill="#5fa8d8" /><circle cx="14" cy="4" r="2" fill="#d0a23e" /><circle cx="19" cy="8" r="2" fill="#a44eb8" /><circle cx="14" cy="11" r="2" fill="#c9486d" /><circle cx="19" cy="2" r="1.3" fill="#d9534f" /></svg></TaskBtn>
        <TaskBtn $w={38} $ml={4} $run><Chrome><ChromeCore /></Chrome></TaskBtn>
        <TaskBtn $w={38} $ml={8} $run><svg width="21" height="18" viewBox="0 0 21 18"><path d="M0 2h8l2 2h11v14H0z" fill="#f0c65a" /><path d="M5 9h11v9H5z" fill="#5bb3e0" /></svg></TaskBtn>
        <TaskBtn $w={38} $ml={8} $run><svg width="18" height="18" viewBox="0 0 18 18"><circle cx="9" cy="9" r="8" fill="none" stroke="#aab2bb" strokeWidth="1.4" /><circle cx="9" cy="9" r="3" fill="#e6e6e6" /></svg></TaskBtn>
        <TaskBtn $w={46} $ml={4} $on $run><AppTile $w={21} $h={17} $bg="#217346" $fs={12} $pad={3} $pw={8}>X</AppTile></TaskBtn>
        <TaskBtn $w={38} $ml={4} $run><AppTile $w={21} $h={17} $bg="#0a73c4" $fs={12} $pad={3} $pw={9}>O</AppTile></TaskBtn>
        <SmallTray>
          <SmallTile $bg="#217346">X</SmallTile>
          <SmallTile $bg="#0a73c4">O</SmallTile>
          <SmallTile $bg="#d24726">P</SmallTile>
          <SmallTile $bg="#2b579a">W</SmallTile>
          <SmallTile $bg="#31752f">P</SmallTile>
          <SmallTile $bg="#2f8fd0">S</SmallTile>
          <svg width="15" height="14" viewBox="0 0 15 14"><circle cx="7.5" cy="7" r="6.5" fill="#4a53b8" /><path d="M4 10l6-7 2 3-5 5z" fill="#e86a9a" /></svg>
        </SmallTray>
        <TrayArea>
          <TrayIcon $w={22}><svg width="12" height="7" viewBox="0 0 12 7"><path d="M1 6l5-5 5 5" fill="none" stroke="#eee" strokeWidth="1.2" /></svg></TrayIcon>
          <TrayIcon $w={22}><svg width="15" height="16" viewBox="0 0 15 16"><path d="M1 1l3 2 3.5-2L11 3l3-2v10l-6.5 5L1 11z" fill="#c1121f" /><path d="M4 5l3.5 5L11 5v5l-3.5 3L4 10z" fill="#111" /></svg></TrayIcon>
          <TrayIcon $w={24}><svg width="16" height="16" viewBox="0 0 16 16"><circle cx="8" cy="8" r="7.5" fill="#47a7d6" /><path d="M4 6h7M4 9h5" stroke="#fff" strokeWidth="1.5" /><circle cx="12.5" cy="12.5" r="3" fill="#bbb" /></svg></TrayIcon>
          <TrayIcon $w={23}><svg width="16" height="11" viewBox="0 0 16 11"><path d="M.5 3h3v5h-3z" fill="#eee" /><rect x="4.5" y="2.5" width="11" height="7" fill="#111" stroke="#eee" /><rect x="6" y="4" width="6" height="4" fill="#eee" /></svg></TrayIcon>
          <TrayIcon $w={23}><svg width="16" height="13" viewBox="0 0 16 13"><path d="M1 4h3l4-3v11L4 9H1z" fill="none" stroke="#eee" /><path d="M10 4c1 1 1 4 0 5M12 2c2 2 2 7 0 9" fill="none" stroke="#bbb" /></svg></TrayIcon>
          <TrayIcon $w={25}><svg width="14" height="13" viewBox="0 0 14 13"><path d="M1 12C2 6 6 2 13 1M5 12c1-3 3-5 8-7M9 12c0-2 2-3 4-3" fill="none" stroke="#ccc" /><circle cx="12" cy="11.5" r="1.3" fill="#eee" /></svg></TrayIcon>
          <Lang>ESP</Lang>
          <Clock>22:13<br />25/1/2019</Clock>
          <Notif>
            <svg width="16" height="14" viewBox="0 0 16 14"><path d="M0 0h16v10H6l-3 4v-4H0z" fill="#eee" /><path d="M3 3h10M3 6h10" stroke="#777" /></svg>
            <NotifBadge>4</NotifBadge>
          </Notif>
        </TrayArea>
      </Task>

      <Halo />
      <Pointer viewBox="0 0 12 19"><path d="M.5.5v15l4-3.5 2.5 6 2.5-1-2.5-5.5h5z" fill="#fff" stroke="#222" /></Pointer>
    </Window>
  );
}
